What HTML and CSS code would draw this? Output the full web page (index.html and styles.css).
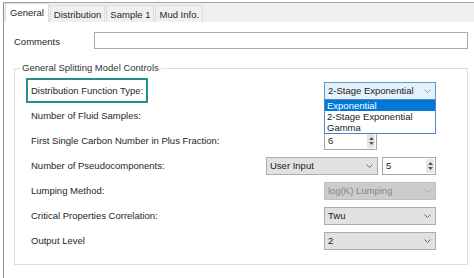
FILE: index.html
```html
<!DOCTYPE html>
<html lang="en">
<head>
  <meta charset="UTF-8" />
  <title>General</title>
  <link rel="stylesheet" href="styles.css">
</head>
<body>
  <div class="frame">
    <div class="tabs">
      <span class="tab active">General</span>
      <span class="tab">Distribution</span>
      <span class="tab">Sample 1</span>
      <span class="tab">Mud Info.</span>
    </div>

    <div class="page">
      <div class="comments">
        <span class="comments-label">Comments</span>
        <div class="text-box"></div>
      </div>

      <fieldset class="group">
        <legend>General Splitting Model Controls</legend>
        <div class="rows">
          <div class="row">
            <span class="label focus">Distribution Function Type:</span>
            <div class="controls col">
              <div class="combo open">
                <span class="value">2-Stage Exponential</span>
                <svg class="chev" width="7" height="4" viewBox="0 0 7 4"><polyline points="0.5,0.5 3.5,3.5 6.5,0.5" /></svg>
                <ul class="list">
                  <li class="selected">Exponential</li>
                  <li>2-Stage Exponential</li>
                  <li>Gamma</li>
                </ul>
              </div>
            </div>
          </div>
          <div class="row">
            <span class="label">Number of Fluid Samples:</span>
          </div>
          <div class="row">
            <span class="label">First Single Carbon Number in Plus Fraction:</span>
            <div class="controls col">
              <div class="spin"><span class="value">6</span><span class="spin-btn"><svg width="7" height="12" viewBox="0 0 7 12"><polygon points="3.5,2 6,5 1,5" /><polygon points="1,7 6,7 3.5,10" /></svg></span></div>
            </div>
          </div>
          <div class="row">
            <span class="label">Number of Pseudocomponents:</span>
            <div class="controls">
              <div class="combo">
                <span class="value">User Input</span>
                <svg class="chev" width="7" height="4" viewBox="0 0 7 4"><polyline points="0.5,0.5 3.5,3.5 6.5,0.5" /></svg>
              </div>
              <div class="spin short"><span class="value">5</span><span class="spin-btn"><svg width="7" height="12" viewBox="0 0 7 12"><polygon points="3.5,2 6,5 1,5" /><polygon points="1,7 6,7 3.5,10" /></svg></span></div>
            </div>
          </div>
          <div class="row">
            <span class="label">Lumping Method:</span>
            <div class="controls">
              <div class="combo disabled">
                <span class="value">log(K) Lumping</span>
                <svg class="chev" width="7" height="4" viewBox="0 0 7 4"><polyline points="0.5,0.5 3.5,3.5 6.5,0.5" /></svg>
              </div>
            </div>
          </div>
          <div class="row">
            <span class="label">Critical Properties Correlation:</span>
            <div class="controls">
              <div class="combo">
                <span class="value">Twu</span>
                <svg class="chev" width="7" height="4" viewBox="0 0 7 4"><polyline points="0.5,0.5 3.5,3.5 6.5,0.5" /></svg>
              </div>
            </div>
          </div>
          <div class="row">
            <span class="label">Output Level</span>
            <div class="controls">
              <div class="combo">
                <span class="value">2</span>
                <svg class="chev" width="7" height="4" viewBox="0 0 7 4"><polyline points="0.5,0.5 3.5,3.5 6.5,0.5" /></svg>
              </div>
            </div>
          </div>
        </div>
      </fieldset>
    </div>
  </div>
</body>
</html>
```

FILE: styles.css
```css
body {
  margin: 0;
  padding: 2px 0 0 3px;
  font-family: 'Liberation Sans', Arial, sans-serif;
  font-size: 9.5px;
  color: #262626;
  background: #fff;
  overflow: hidden;
}
.frame {
  border-top: 1px solid #a3a3a3;
  border-left: 1px solid #8e8e8e;
  height: 275px;
}
.tabs {
  display: flex;
  align-items: flex-end;
  height: 19px;
  padding-left: 1px;
  background: #f0f0f0;
}
.tab {
  height: 16px;
  line-height: 17px;
  padding: 0 3px;
  border: 1px solid #dcdcdc;
  border-bottom: none;
  margin-left: 1px;
  white-space: nowrap;
}
.tab.active {
  height: 18px;
  line-height: 18px;
  padding: 0 4px;
  margin-left: 0;
  background: #fff;
}
.page {
  padding: 10px 6px 0 10px;
}
.comments {
  display: flex;
  align-items: center;
  height: 17px;
}
.comments-label {
  width: 80px;
  padding-top: 2px;
}
.text-box {
  flex: 1;
  height: 17px;
  box-sizing: border-box;
  border: 1px solid #ababab;
  background: #fff;
}
.group {
  margin: 13px 0 0;
  padding: 4px 31px 11px 5px;
  border: 1px solid #dcdcdc;
  min-width: 0;
}
.group legend {
  padding: 0 2px;
  line-height: 12px;
  color: #333;
}
.rows {
  margin-left: 6px;
}
.row {
  display: flex;
  align-items: center;
  height: 25px;
}
.label {
  display: flex;
  align-items: center;
  height: 25px;
  box-sizing: border-box;
  padding: 0 3px;
  border: 2px solid transparent;
  white-space: nowrap;
}
.label.focus {
  border-color: #23908e;
}
.controls {
  margin-left: auto;
  display: flex;
  gap: 4px;
}
.controls.col {
  width: 112px;
}
.combo, .spin {
  position: relative;
  display: flex;
  align-items: center;
  width: 112px;
  height: 18px;
  box-sizing: border-box;
  padding-left: 3px;
  border: 1px solid #adadad;
  background: #e1e1e1;
  color: #1a1a1a;
}
.combo .value, .spin .value {
  flex: 1;
  white-space: nowrap;
}
.chev {
  margin-right: 4px;
  fill: none;
  stroke: #6d6d6d;
  stroke-width: 1;
}
.combo.open {
  border-color: #5b9bd5;
  background: #e5f1fb;
}
.combo.open .chev {
  stroke: #8a9bb0;
}
.combo.disabled {
  border-color: #bfbfbf;
  background: #cccccc;
  color: #858585;
}
.combo.disabled .chev {
  stroke: #adadad;
}
.list {
  position: absolute;
  top: 16px;
  left: -1px;
  width: 112px;
  box-sizing: border-box;
  margin: 0;
  padding: 0;
  list-style: none;
  border: 1px solid #4f86c6;
  background: #fff;
  z-index: 2;
}
.list li {
  height: 11px;
  line-height: 11px;
  padding-left: 2px;
  white-space: nowrap;
}
.list li.selected {
  background: #0078d7;
  color: #fff;
}
.spin {
  width: 53px;
  background: #fff;
  border-color: #a6a6a6;
}
.spin.short {
  width: 54px;
}
.spin-btn {
  display: flex;
  align-items: center;
  justify-content: center;
  width: 8px;
  height: 14px;
  margin-right: 1px;
  background: #e6e6e6;
}
.spin-btn svg {
  fill: #555;
}
```
